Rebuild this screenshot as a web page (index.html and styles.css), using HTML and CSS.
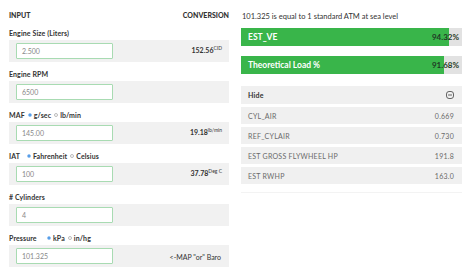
FILE: index.html
```html
<!DOCTYPE html>
<html lang="en">
<head>
  <meta charset="UTF-8">
  <title>VE Calculator</title>
  <link rel="stylesheet" href="styles.css">
</head>
<body>

  <div class="page">
    <div class="inputs">
      <div class="head">
        <span>INPUT</span>
        <span>CONVERSION</span>
      </div>

      <div class="group">
        <div class="label">Engine Size (Liters)</div>
        <div class="row">
          <div class="field">2.500</div>
          <div class="conv">152.56<sup>CID</sup></div>
        </div>
      </div>

      <div class="group">
        <div class="label">Engine RPM</div>
        <div class="row">
          <div class="field">6500</div>
          <div class="conv"></div>
        </div>
      </div>

      <div class="group">
        <div class="label">MAF <span class="radio on"></span>g/sec <span class="radio"></span>lb/min</div>
        <div class="row">
          <div class="field">145.00</div>
          <div class="conv">19.18<sup>lb/min</sup></div>
        </div>
      </div>

      <div class="group">
        <div class="label"><span class="key iat">IAT</span><span class="radio on"></span>Fahrenheit <span class="radio"></span>Celsius</div>
        <div class="row">
          <div class="field">100</div>
          <div class="conv">37.78<sup>Deg C</sup></div>
        </div>
      </div>

      <div class="group">
        <div class="label"># Cylinders</div>
        <div class="row">
          <div class="field">4</div>
          <div class="conv"></div>
        </div>
      </div>

      <div class="group">
        <div class="label"><span class="key pressure">Pressure</span><span class="radio on"></span>kPa <span class="radio"></span>in/hg</div>
        <div class="row">
          <div class="field">101.325</div>
          <div class="conv note">&lt;-MAP "or" Baro</div>
        </div>
      </div>
    </div>

    <div class="results">
      <p class="info">101.325 is equal to 1 standard ATM at sea level</p>

      <div class="bar">
        <div class="fill" style="width: 94.32%"></div>
        <span class="bar-name">EST_VE</span>
        <span class="bar-value">94.32%</span>
      </div>

      <div class="bar">
        <div class="fill" style="width: 91.68%"></div>
        <span class="bar-name">Theoretical Load %</span>
        <span class="bar-value">91.68%</span>
      </div>

      <div class="table">
        <div class="trow toggle">
          <span>Hide</span>
          <svg width="8" height="8" viewBox="0 0 8 8">
            <rect x="0.5" y="0.5" width="7" height="7" rx="2.5" fill="none" stroke="#555" stroke-width="0.9"/>
            <line x1="2" y1="4" x2="6" y2="4" stroke="#555" stroke-width="0.9"/>
          </svg>
        </div>
        <div class="trow"><span>CYL_AIR</span><span>0.669</span></div>
        <div class="trow"><span>REF_CYLAIR</span><span>0.730</span></div>
        <div class="trow"><span>EST GROSS FLYWHEEL HP</span><span>191.8</span></div>
        <div class="trow"><span>EST RWHP</span><span>163.0</span></div>
      </div>
      <div class="rule"></div>
    </div>
  </div>

</body>
</html>
```

FILE: styles.css
```css
body {
  margin: 0;
  font-family: "Lato", "Open Sans", sans-serif;
  color: #333;
  background: #fff;
}

.page {
  display: flex;
  gap: 12px;
  padding: 9px 12px 0 9px;
}

.inputs {
  width: 220px;
}

.head {
  display: flex;
  justify-content: space-between;
  height: 12px;
  line-height: 12px;
  font-size: 7px;
  font-weight: 900;
  margin-bottom: 6px;
}

.group {
  margin-bottom: 6px;
}

.label {
  height: 12px;
  line-height: 12px;
  font-size: 7px;
  font-weight: 700;
  letter-spacing: 0.1px;
  margin-bottom: 1px;
  display: flex;
  align-items: center;
}

.key {
  display: inline-block;
}

.key.iat { width: 18px; }
.key.pressure { width: 38px; }

.radio {
  display: inline-block;
  width: 4px;
  height: 4px;
  border-radius: 50%;
  border: 0.8px solid #bbb;
  margin: 0 2px 0 3px;
  box-sizing: border-box;
}

.key + .radio { margin-left: 0; }

.radio.on {
  background: #3a8ee6;
  border-color: #9cc6f2;
}

.row {
  display: flex;
  justify-content: space-between;
  background: #f1f1f1;
  height: 22px;
  padding: 3px 7px 3px 7px;
  box-sizing: border-box;
}

.field {
  width: 97px;
  height: 16px;
  box-sizing: border-box;
  border: 1px solid #a8dbb2;
  background: #fff;
  border-radius: 1px;
  font-size: 7px;
  color: #888;
  line-height: 14px;
  padding-left: 5px;
}

.conv {
  font-size: 7px;
  font-weight: 700;
  padding-top: 2px;
}

.conv sup {
  font-size: 5px;
  font-weight: 400;
  vertical-align: 3px;
}

.conv.note {
  padding-top: 5px;
  font-weight: 400;
  padding-right: 1px;
}

.results {
  width: 221px;
}

.info {
  margin: 3px 0 6px 1px;
  font-size: 7.5px;
  line-height: 10px;
}

.bar {
  position: relative;
  height: 18px;
  background: #e2e2e2;
  margin-bottom: 10px;
  display: flex;
  align-items: center;
  justify-content: space-between;
  font-size: 8.5px;
  font-weight: 700;
}

.fill {
  position: absolute;
  left: 0;
  top: 0;
  bottom: 0;
  background: #39b54a;
}

.bar-name {
  position: relative;
  color: #fff;
  padding-left: 7px;
}

.bar-value {
  position: relative;
  color: #1f3a24;
  font-size: 8px;
  padding-right: 3px;
}

.table {
  margin-top: 12px;
  display: flex;
  flex-direction: column;
  gap: 3px;
}

.trow {
  display: flex;
  justify-content: space-between;
  align-items: center;
  background: #f0f0f0;
  height: 17px;
  padding: 0 8px 0 7px;
  font-size: 7px;
  letter-spacing: 0.25px;
  color: #6a6a6a;
}

.trow.toggle {
  height: 18px;
  color: #333;
  font-weight: 700;
}

.rule {
  margin-top: 8px;
  height: 1px;
  background: #f3f3f3;
}
```
